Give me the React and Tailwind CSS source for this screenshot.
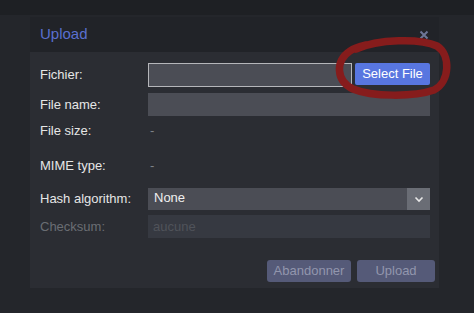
export default function App() {
  return (
    <div className="relative w-[474px] h-[313px] overflow-hidden bg-[#24262b] text-[13px] text-[#e6e6e6]" style={{ fontFamily: '"Liberation Sans", Arial, sans-serif' }}>
      <div className="h-[15px] bg-[#1e2024]" />
      <div className="pl-[30px] pt-[2px]">
        <div className="w-[409px]">
          <div className="h-[35px] bg-[#212328] flex items-center justify-between pl-[10px] pr-[10px]">
            <span className="text-[15px] text-[#5a6fd0]">Upload</span>
            <svg width="10" height="10" viewBox="0 0 10 10"><path d="M1.5 1.5 L8.5 8.5 M8.5 1.5 L1.5 8.5" fill="none" stroke="#6d7596" strokeWidth="2" /></svg>
          </div>
          <div className="h-[236px] bg-[#2b2d33] pl-[10px] pr-[9px] pt-[11px] flex flex-col">
            <div className="flex items-center h-[24px]">
              <div className="w-[108px]">Fichier:</div>
              <div className="w-[204px] h-[24px] bg-[#4b4d55] border border-[#b5b6ba]" />
              <div className="ml-[3px] w-[75px] h-[22px] self-start rounded-[2px] bg-[#5876e0] text-white flex items-center justify-center">Select File</div>
            </div>
            <div className="flex items-center h-[23px] mt-[6px]">
              <div className="w-[108px]">File name:</div>
              <div className="flex-1 h-[23px] bg-[#4b4d55]" />
            </div>
            <div className="flex items-center h-[24px] mt-[3px]">
              <div className="w-[108px]">File size:</div>
              <div className="pl-[2px] text-[#7f8288]">-</div>
            </div>
            <div className="flex items-center h-[24px] mt-[11px]">
              <div className="w-[108px]">MIME type:</div>
              <div className="pl-[2px] text-[#7f8288]">-</div>
            </div>
            <div className="flex items-center h-[22px] mt-[10px]">
              <div className="w-[108px]">Hash algorithm:</div>
              <div className="flex-1 h-[22px] bg-[#4b4d55] flex items-stretch">
                <div className="flex-1 pl-[6px] flex items-center pb-[3px] text-[#f0f0f0]">None</div>
                <div className="w-[23px] bg-[#6a6d75] flex items-center justify-center">
                  <svg width="10" height="7" viewBox="0 0 10 7"><path d="M1.5 1.5 L5 5 L8.5 1.5" fill="none" stroke="#e8e8e8" strokeWidth="1.6" /></svg>
                </div>
              </div>
            </div>
            <div className="flex items-center h-[23px] mt-[5px]">
              <div className="w-[108px] text-[#6a6d73]">Checksum:</div>
              <div className="flex-1 h-[23px] bg-[#363941] pl-[5px] flex items-center text-[#50535a]">aucune</div>
            </div>
            <div className="flex justify-end gap-[6px] mt-[22px] mr-[-5px]">
              <div className="w-[84px] h-[22px] rounded-[3px] bg-[#555a78] text-[#9296ad] flex items-center justify-center">Abandonner</div>
              <div className="w-[78px] h-[22px] rounded-[3px] bg-[#555a78] text-[#9296ad] flex items-center justify-center">Upload</div>
            </div>
          </div>
        </div>
      </div>
      <svg className="absolute left-0 top-0 pointer-events-none" width="474" height="313" viewBox="0 0 474 313">
        <path d="M 356 49 C 378 39, 420 38, 437 46 C 451 55, 450 82, 434 90 C 414 97, 372 97, 353 89 C 336 81, 335 61, 350 51 C 356 47, 362 46, 366 45" fill="none" stroke="#861c1c" strokeWidth="7.5" strokeLinecap="round" />
      </svg>
    </div>
  );
}
